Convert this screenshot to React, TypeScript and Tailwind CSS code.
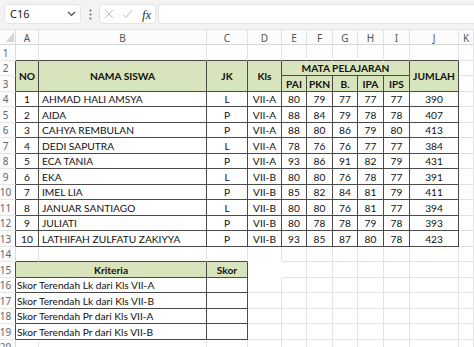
import React from 'react';
import clsx from 'clsx';

const data: string[][] = [
  ['1', 'AHMAD HALI AMSYA', 'L', 'VII-A', '80', '79', '77', '77', '77', '390'],
  ['2', 'AIDA', 'P', 'VII-A', '88', '84', '79', '78', '78', '407'],
  ['3', 'CAHYA REMBULAN', 'P', 'VII-A', '88', '80', '86', '79', '80', '413'],
  ['4', 'DEDI SAPUTRA', 'L', 'VII-A', '78', '76', '76', '77', '77', '384'],
  ['5', 'ECA TANIA', 'P', 'VII-A', '93', '86', '91', '82', '79', '431'],
  ['6', 'EKA', 'L', 'VII-B', '80', '80', '76', '78', '77', '391'],
  ['7', 'IMEL LIA', 'P', 'VII-B', '85', '82', '84', '81', '79', '411'],
  ['8', 'JANUAR SANTIAGO', 'L', 'VII-B', '80', '80', '76', '81', '77', '394'],
  ['9', 'JULIATI', 'P', 'VII-B', '80', '78', '78', '79', '78', '393'],
  ['10', 'LATHIFAH ZULFATU ZAKIYYA', 'P', 'VII-B', '93', '85', '87', '80', '78', '423'],
];

const kriteria = [
  'Skor Terendah Lk dari Kls VII-A',
  'Skor Terendah Lk dari Kls VII-B',
  'Skor Terendah Pr dari Kls VII-A',
  'Skor Terendah Pr dari Kls VII-B',
];

const COLS = ['A', 'B', 'C', 'D', 'E', 'F', 'G', 'H', 'I', 'J', 'K'];

type CellProps = {
  children?: React.ReactNode;
  span?: string;
  rDark?: boolean;
  bDark?: boolean;
  rNone?: boolean;
  bNone?: boolean;
  green?: boolean;
  bold?: boolean;
  left?: 'name' | 'krit';
};

function Cell({ children, span, rDark, bDark, rNone, bNone, green, bold, left }: CellProps) {
  return (
    <div
      className={clsx(
        'flex items-center whitespace-nowrap overflow-hidden border-r border-b text-[10.2px] text-[#111] leading-none pt-[1px]',
        span,
        rNone ? 'border-r-white' : rDark ? 'border-r-[#4a4a4a]' : 'border-r-[#e3e3e3]',
        bNone ? 'border-b-white' : bDark ? 'border-b-[#4a4a4a]' : 'border-b-[#e3e3e3]',
        green ? 'bg-[#d8e4bc]' : 'bg-white',
        bold && 'font-bold',
        left === 'name' && 'justify-start pl-[3px]',
        left === 'krit' && 'justify-start pl-[1px]',
        !left && 'justify-center'
      )}
    >
      {children}
    </div>
  );
}

function RowHdr({ n, dark }: { n: number; dark?: boolean }) {
  return (
    <div
      className={clsx(
        'flex items-center justify-center pr-[4px] pt-[1px] border-r border-b border-b-[#e6e6e6] bg-[#fcfcfc] text-[10px] text-[#666] leading-none',
        dark ? 'border-r-[#4a4a4a]' : 'border-r-[#dadada]'
      )}
      style={{ fontFamily: '"Noto Sans", sans-serif' }}
    >
      {n}
    </div>
  );
}

function Grid({ count, bDarkCount = 0, rDarkFirst = false }: { count: number; bDarkCount?: number; rDarkFirst?: boolean }) {
  return (
    <>
      {Array.from({ length: count }).map((_, i) => (
        <Cell key={i} bDark={i < bDarkCount} rDark={rDarkFirst && i === 0} />
      ))}
    </>
  );
}

export default function App() {
  const cells: React.ReactNode[] = [];

  // column header row
  cells.push(
    <div key="corner" className="flex items-end justify-end pr-[1px] pb-[2px] border-r border-b border-r-[#dadada] border-b-[#d6d6d6] bg-[#fcfcfc]">
      <svg width="8" height="10" viewBox="0 0 8 10">
        <polygon points="8,0 8,10 0,10" fill="#d4d4d4" />
      </svg>
    </div>
  );
  COLS.forEach((c) => {
    cells.push(
      <div
        key={'h' + c}
        className="flex items-center justify-center pt-[1px] border-r border-b border-r-[#e2e2e2] border-b-[#d6d6d6] bg-[#fcfcfc] text-[10px] text-[#555] leading-none"
        style={{ fontFamily: '"Noto Sans", sans-serif' }}
      >
        {c}
      </div>
    );
  });

  // row 1
  cells.push(<RowHdr key="r1" n={1} />);
  for (let i = 0; i < 11; i++) cells.push(<Cell key={'r1c' + i} bDark={i < 10} />);

  // rows 2-3 header
  cells.push(<RowHdr key="r2" n={2} dark />);
  cells.push(<Cell key="no" span="row-span-2" rDark bDark green bold>NO</Cell>);
  cells.push(<Cell key="nama" span="row-span-2" rDark bDark green bold>NAMA SISWA</Cell>);
  cells.push(<Cell key="jk" span="row-span-2" rDark bDark green bold>JK</Cell>);
  cells.push(<Cell key="kls" span="row-span-2" rDark bDark green bold>Kls</Cell>);
  cells.push(<Cell key="mp" span="col-span-5" rDark bDark green bold>MATA PELAJARAN</Cell>);
  cells.push(<Cell key="jml" span="row-span-2" rDark bDark green bold>JUMLAH</Cell>);
  cells.push(<Cell key="r2k" />);
  cells.push(<RowHdr key="r3" n={3} dark />);
  ['PAI', 'PKN', 'B.', 'IPA', 'IPS'].forEach((s) =>
    cells.push(<Cell key={'s' + s} rDark bDark green bold>{s}</Cell>)
  );
  cells.push(<Cell key="r3k" />);

  // data rows
  data.forEach((row, ri) => {
    cells.push(<RowHdr key={'dr' + ri} n={ri + 4} dark />);
    row.forEach((v, ci) => {
      cells.push(
        <Cell key={'d' + ri + '-' + ci} rDark bDark left={ci === 1 ? 'name' : undefined}>
          {v}
        </Cell>
      );
    });
    cells.push(<Cell key={'dk' + ri} />);
  });

  // row 14
  cells.push(<RowHdr key="r14" n={14} />);
  for (let i = 0; i < 11; i++)
    cells.push(<Cell key={'r14c' + i} bDark={i < 3} bNone={i === 3} />);

  // row 15
  cells.push(<RowHdr key="r15" n={15} dark />);
  cells.push(<Cell key="krit" span="col-span-2" rDark bDark green bold>Kriteria</Cell>);
  cells.push(<Cell key="skor" rDark bDark green bold>Skor</Cell>);
  for (let i = 0; i < 8; i++) cells.push(<Cell key={'r15c' + i} rNone={i === 0} bNone={i === 0} />);

  // rows 16-19
  kriteria.forEach((k, ki) => {
    cells.push(<RowHdr key={'kr' + ki} n={16 + ki} dark />);
    cells.push(<Cell key={'kt' + ki} span="col-span-2" rDark bDark left="krit">{k}</Cell>);
    cells.push(<Cell key={'ks' + ki} rDark bDark />);
    for (let i = 0; i < 8; i++) cells.push(<Cell key={'kg' + ki + '-' + i} />);
  });

  // row 20
  cells.push(<RowHdr key="r20" n={20} />);
  for (let i = 0; i < 11; i++) cells.push(<Cell key={'r20c' + i} />);

  return (
    <div className="w-[474px] h-[347px] overflow-hidden bg-white" style={{ fontFamily: 'Lato, "Noto Sans", sans-serif' }}>
      {/* toolbar */}
      <div className="h-[30px] bg-[#f3f3f3] border-b border-[#e2e2e2] flex items-start pt-[4px] pl-[4px]">
        <div
          className="w-[77px] h-[20px] bg-white rounded-[4px] border border-[#e4e4e4] flex items-center justify-between pl-[5px] pr-[4px] text-[11px] text-[#222]"
          style={{ fontFamily: '"Noto Sans", sans-serif' }}
        >
          <span>C16</span>
          <svg width="9" height="6" viewBox="0 0 9 6">
            <polyline points="1,1 4.5,4.5 8,1" fill="none" stroke="#444" strokeWidth="1.1" />
          </svg>
        </div>
        <div className="w-[18px] h-[20px] flex items-center justify-center">
          <svg width="3" height="11" viewBox="0 0 3 11">
            <circle cx="1.5" cy="1.5" r="1" fill="#666" />
            <circle cx="1.5" cy="5.5" r="1" fill="#666" />
            <circle cx="1.5" cy="9.5" r="1" fill="#666" />
          </svg>
        </div>
        <div className="w-[57px] h-[20px] bg-white rounded-[4px] border border-[#e4e4e4] flex items-center pl-[4px] gap-[8px]">
          <svg width="10" height="10" viewBox="0 0 10 10">
            <path d="M1 1 L9 9 M9 1 L1 9" stroke="#bdbdbd" strokeWidth="1" />
          </svg>
          <svg width="11" height="10" viewBox="0 0 11 10">
            <polyline points="1,5.5 4,8.5 10,1" fill="none" stroke="#bdbdbd" strokeWidth="1" />
          </svg>
          <span
            className="italic text-[13px] text-[#333] leading-none ml-[1px]"
            style={{ fontFamily: '"Liberation Serif", serif' }}
          >
            fx
          </span>
        </div>
        <div className="ml-[2px] flex-1 h-[20px] bg-white rounded-l-[4px] border border-r-0 border-[#e4e4e4]" />
      </div>

      {/* sheet */}
      <div className="grid grid-cols-[16px_23px_168px_41px_34px_25px_26px_25px_26px_26px_49px_1fr] grid-rows-[15px_repeat(20,15.5px)]">
        {cells}
      </div>
    </div>
  );
}
